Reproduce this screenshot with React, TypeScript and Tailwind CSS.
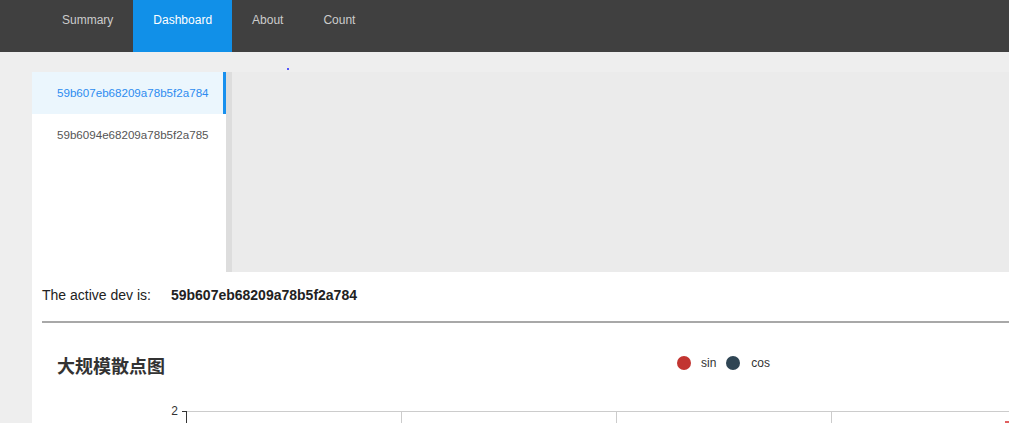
import React from 'react'

const devs = ['59b607eb68209a78b5f2a784', '59b6094e68209a78b5f2a785']
const tabs = ['Summary', 'Dashboard', 'About', 'Count']

const NavBar = () => (
    <div className="h-[52px] bg-[#404040] flex flex-row pl-[42px]">
        {tabs.map(t => (
            <div key={t}
                className={`h-full pt-[12px] px-[20px] text-[12px] leading-[16px] ${t === 'Dashboard' ? 'bg-[#1190e8] text-white' : 'text-[#cccccc]'}`}>
                {t}
            </div>
        ))}
    </div>
)

const DevList = ({ active }: { active: number }) => (
    <div className="flex flex-row h-[200px] bg-white">
        <div className="w-[194px] flex flex-col">
            {devs.map((d, i) => (
                <div key={d}
                    className={`h-[42px] flex items-center pl-[25px] text-[11.6px] ${i === active ? 'bg-[#ebf6fd] text-[#2d8cf0] border-r-[3px] border-[#1890ee]' : 'text-[#555555]'}`}>
                    {d}
                </div>
            ))}
        </div>
        <div className="w-[6px] bg-[#dddddd]"></div>
        {/* map placeholder */}
        <div className="flex-1 bg-[#ebebeb]"></div>
    </div>
)

const Chart = () => (
    <div className="flex flex-col">
        <div className="flex flex-row items-center mt-[32px] h-[24px]">
            <div className="w-[520px] pl-[15px] text-[18px] font-bold text-[#333333]">大规模散点图</div>
            {/* legend */}
            <div className="flex flex-row items-center text-[12px] text-[#333333] ml-[115px] mb-[8px]">
                <span className="w-[14px] h-[14px] rounded-full bg-[#c23531]"></span>
                <span className="ml-[10px]">sin</span>
                <span className="w-[14px] h-[14px] rounded-full bg-[#2f4554] ml-[10px]"></span>
                <span className="ml-[11px]">cos</span>
            </div>
        </div>
        <svg width="1400" height="60" className="block">
            <text x="136" y="36" textAnchor="end" fontSize="12" fill="#333">2</text>
            <line x1="144" y1="32.5" x2="1400" y2="32.5" stroke="#cccccc" />
            <line x1="359.5" y1="32" x2="359.5" y2="60" stroke="#cccccc" />
            <line x1="574.5" y1="32" x2="574.5" y2="60" stroke="#cccccc" />
            <line x1="789.5" y1="32" x2="789.5" y2="60" stroke="#cccccc" />
            <line x1="1004.5" y1="32" x2="1004.5" y2="60" stroke="#cccccc" />
            <line x1="140" y1="32.5" x2="144.5" y2="32.5" stroke="#333" />
            <line x1="144.5" y1="32" x2="144.5" y2="60" stroke="#333" />
            <rect x="963" y="42" width="4" height="2" fill="#e06060" />
        </svg>
    </div>
)

const App = () => {
    return (
        <div className="w-full h-[423px] overflow-hidden bg-[#eeeeee] font-['Liberation_Sans','Noto_Sans_CJK_SC',sans-serif]">
            <NavBar />
            <div className="relative pt-[20px] pl-[32px]">
                <div className="absolute left-[287px] top-[16px] w-[2px] h-[2px] rounded-full bg-[#2222ff]"></div>
                <div className="bg-white w-[1400px]">
                    <DevList active={0} />
                    <div className="pl-[10px]">
                        <div className="flex flex-row items-center pt-[13px] h-[33px] text-[14px] text-[#222222]">
                            <span>The active dev is:</span>
                            <span className="ml-[20px] font-bold">59b607eb68209a78b5f2a784</span>
                        </div>
                        <div className="mt-[16px] border-t-[2px] border-[#a8a8a8]"></div>
                        <Chart />
                    </div>
                </div>
            </div>
        </div>
    )
}
export default App
